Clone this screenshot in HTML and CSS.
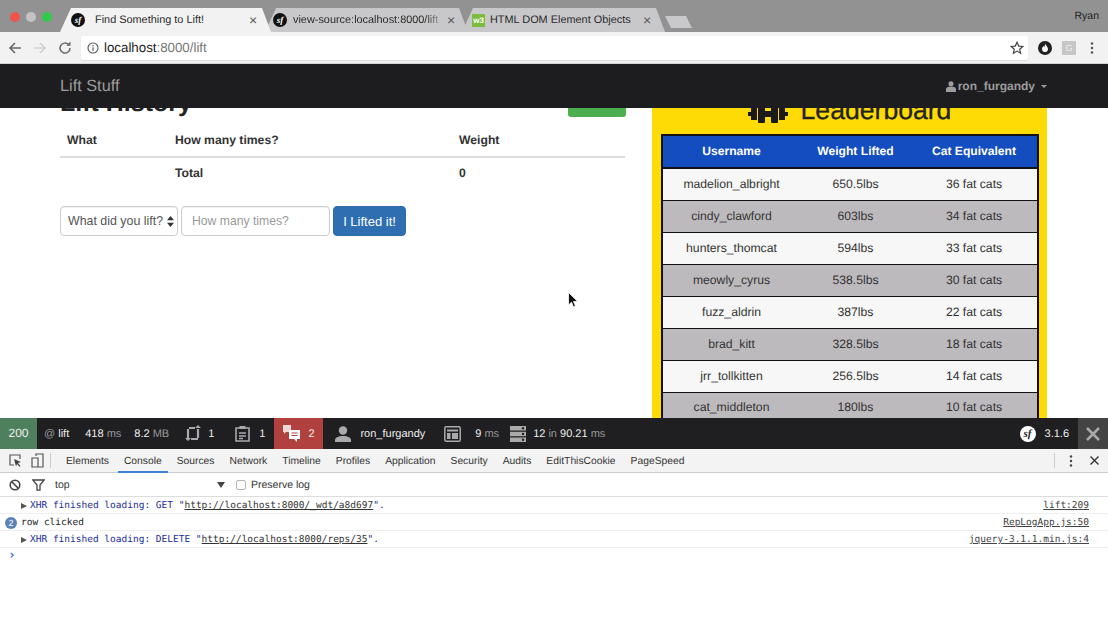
FILE: index.html
```html
<!DOCTYPE html>
<html lang="en">
<head>
<meta charset="utf-8">
<title>Find Something to Lift!</title>
<link rel="stylesheet" href="styles.css">
</head>
<body>
<div class="window">
  <header class="tabstrip">
    <div class="traffic"><i class="dot red"></i><i class="dot grey"></i><i class="dot green"></i></div>
    <div class="tabs">
      <div class="tab tab-active">
        <span class="sf sf-dark">sf</span><span class="tab-title">Find Something to Lift!</span><span class="tab-x">×</span>
      </div>
      <div class="tab tab-second">
        <span class="sf sf-dark">sf</span><span class="tab-title tab-fade">view-source:localhost:8000/lift</span><span class="tab-x">×</span>
      </div>
      <div class="tab tab-third">
        <span class="w3">w3</span><span class="tab-title">HTML DOM Element Objects</span><span class="tab-x">×</span>
      </div>
      <div class="tab-new"></div>
    </div>
    <span class="profile">Ryan</span>
  </header>

  <div class="addressbar">
    <svg class="nav-ico" width="16" height="16" viewBox="0 0 16 16"><path d="M14 8H3M8 3L3 8l5 5" fill="none" stroke="#666" stroke-width="1.5"/></svg>
    <svg class="nav-ico" width="16" height="16" viewBox="0 0 16 16"><path d="M2 8h11M8 3l5 5-5 5" fill="none" stroke="#cfcfcf" stroke-width="1.5"/></svg>
    <svg class="nav-ico" width="16" height="16" viewBox="0 0 16 16"><path d="M13 8a5 5 0 1 1-1.5-3.5" fill="none" stroke="#666" stroke-width="1.5"/><path d="M13.5 1.5v4.2H9.3z" fill="#666"/></svg>
    <div class="omnibox">
      <svg width="12" height="12" viewBox="0 0 12 12"><circle cx="6" cy="6" r="5" fill="none" stroke="#555" stroke-width="1.1"/><path d="M6 5.2v3.6M6 3v1.2" stroke="#555" stroke-width="1.2"/></svg>
      <span class="url"><b>localhost</b>:8000/lift</span>
      <svg class="star" width="14" height="14" viewBox="0 0 14 14"><path d="M7 1.3l1.7 3.8 4.1.4-3.1 2.7.9 4-3.6-2.1-3.6 2.1.9-4-3.1-2.7 4.1-.4z" fill="none" stroke="#444" stroke-width="1.2"/></svg>
    </div>
    <svg class="ext-fire" width="14" height="14" viewBox="0 0 14 14"><circle cx="7" cy="7" r="7" fill="#222"/><path d="M7 2.5c.5 2 3 3 3 5.600A3 3 0 0 1 7 11a3 3 0 0 1-3-2.900c0-1.500 1-2 1.300-3 .5.4.8.8.9 1.300C6.700 5 7 3.800 7 2.500z" fill="#fff"/></svg>
    <span class="ext-g">G</span>
    <svg class="menu-dots" width="4" height="14" viewBox="0 0 4 14"><circle cx="2" cy="2.500" r="1.300" fill="#555"/><circle cx="2" cy="7" r="1.300" fill="#555"/><circle cx="2" cy="11.500" r="1.300" fill="#555"/></svg>
  </div>

  <nav class="navbar">
    <a class="brand">Lift Stuff</a>
    <div class="nav-user">
      <svg width="10" height="11" viewBox="0 0 11 12"><circle cx="5.500" cy="3" r="2.800" fill="#9d9d9d"/><path d="M0 12V9c0-2 2-3 5.500-3S11 7 11 9v3z" fill="#9d9d9d"/></svg>
      <span>ron_furgandy</span><i class="caret"></i>
    </div>
  </nav>

  <main class="page">
    <section class="history">
      <div class="history-head">
        <h2>Lift History</h2>
        <span class="btn-green"></span>
      </div>
      <table class="lifts">
        <thead><tr><th class="c1">What</th><th class="c2">How many times?</th><th>Weight</th></tr></thead>
        <tbody><tr><td></td><th>Total</th><th>0</th></tr></tbody>
      </table>
      <form class="lift-form">
        <div class="select-wrap">
          <select class="field select"><option>What did you lift?</option></select>
          <svg class="select-arrows" width="7" height="11" viewBox="0 0 7 11"><path d="M3.500 0L7 4.300H0zM3.500 11L0 6.700h7z" fill="#333"/></svg>
        </div>
        <input class="field input" placeholder="How many times?">
        <button class="btn-blue" type="button">I Lifted it!</button>
      </form>
    </section>

    <aside class="board">
      <h2 class="board-title">
        <svg width="40" height="18" viewBox="0 0 40 18"><path d="M0 7h3V3h6v12H3v-4H0zM10 1a1 1 0 0 1 1-1h5a1 1 0 0 1 1 1v5h6V1a1 1 0 0 1 1-1h5a1 1 0 0 1 1 1v16a1 1 0 0 1-1 1h-5a1 1 0 0 1-1-1v-5h-6v5a1 1 0 0 1-1 1h-5a1 1 0 0 1-1-1zM31 3h6v4h3v4h-3v4h-6z" fill="#1a1a1a"/></svg>
        <span>Leaderboard</span>
      </h2>
      <table class="leaders">
        <thead><tr><th class="l1">Username</th><th class="l2">Weight Lifted</th><th>Cat Equivalent</th></tr></thead>
        <tbody>
          <tr><td>madelion_albright</td><td>650.5lbs</td><td>36 fat cats</td></tr>
          <tr><td>cindy_clawford</td><td>603lbs</td><td>34 fat cats</td></tr>
          <tr><td>hunters_thomcat</td><td>594lbs</td><td>33 fat cats</td></tr>
          <tr><td>meowly_cyrus</td><td>538.5lbs</td><td>30 fat cats</td></tr>
          <tr><td>fuzz_aldrin</td><td>387lbs</td><td>22 fat cats</td></tr>
          <tr><td>brad_kitt</td><td>328.5lbs</td><td>18 fat cats</td></tr>
          <tr><td>jrr_tollkitten</td><td>256.5lbs</td><td>14 fat cats</td></tr>
          <tr><td>cat_middleton</td><td>180lbs</td><td>10 fat cats</td></tr>
        </tbody>
      </table>
    </aside>

    <svg class="cursor" width="11" height="16" viewBox="0 0 11 16"><path d="M.5.5v12.500l3-2.800 2 4.800 2-.9-2-4.600h4.200z" fill="#111" stroke="#fff" stroke-width=".8"/></svg>
  </main>

  <div class="sfbar">
    <span class="sf-status">200</span>
    <span class="sf-route"><em>@</em> lift</span>
    <span class="sf-time">418 <em>ms</em></span>
    <span class="sf-mem">8.2 <em>MB</em></span>
    <span class="sf-block sf-forms">
      <svg width="16" height="17" viewBox="0 0 16 17"><path d="M3 4v9M13 4v9M4 3h6M6 14h7" fill="none" stroke="#aaa" stroke-width="2.200"/><path d="M10 3l3-3 3 3zM0 13l3 3 3-3z" fill="#aaa"/></svg>
      <b>1</b>
    </span>
    <span class="sf-block sf-logs">
      <svg width="15" height="17" viewBox="0 0 15 17"><path d="M1 3h13v13H1z" fill="none" stroke="#aaa" stroke-width="1.600"/><path d="M4.500 1h6v3h-6z" fill="#aaa"/><path d="M4 8h7M4 11h7M4 13.500h4" stroke="#aaa" stroke-width="1.300"/></svg>
      <b>1</b>
    </span>
    <span class="sf-errors">
      <svg width="19" height="20" viewBox="0 0 19 20"><path d="M1 1h8v7H4L2 10V8H1z" fill="#f0d8d8"/><path d="M7 6h11v9h-3v3l-3-3H7z" fill="#fff"/><path d="M9.500 9h6M9.500 11.500h6" stroke="#b0413e" stroke-width="1.200"/></svg>
      <b>2</b>
    </span>
    <span class="sf-block sf-user">
      <svg width="16" height="16" viewBox="0 0 16 16"><circle cx="8" cy="4.500" r="4.200" fill="#aaa"/><path d="M0 16v-2c0-2 3-4 8-4s8 2 8 4v2z" fill="#aaa"/></svg>
      <b>ron_furgandy</b>
    </span>
    <span class="sf-block sf-tpl">
      <svg width="17" height="16" viewBox="0 0 17 16"><rect x=".8" y=".8" width="15.400" height="14.400" rx="1.500" fill="none" stroke="#aaa" stroke-width="1.500"/><path d="M3 3.500h11v2H3zM3 7h3.500v6H3zM8 7h6v6H8z" fill="#aaa"/></svg>
      <b>9 <em>ms</em></b>
    </span>
    <span class="sf-block sf-db">
      <svg width="16" height="16" viewBox="0 0 16 16"><path d="M0 0h16v4.500H0zM0 5.800h16v4.500H0zM0 11.500h16V16H0z" fill="#aaa"/><circle cx="13" cy="2.200" r="1.200" fill="#222"/><circle cx="13" cy="8" r="1.200" fill="#222"/><circle cx="13" cy="13.700" r="1.200" fill="#222"/></svg>
      <b>12 <em>in</em> 90.21 <em>ms</em></b>
    </span>
    <span class="sf-version"><span class="sf sf-light">sf</span><b>3.1.6</b></span>
    <span class="sf-close"><svg width="14" height="14" viewBox="0 0 14 14"><path d="M1 1l12 12M13 1L1 13" stroke="#aaa" stroke-width="2.500"/></svg></span>
  </div>

  <section class="devtools">
    <div class="dt-tabs">
      <svg class="dt-ico" width="13" height="13" viewBox="0 0 13 13"><path d="M5 11H1V1h10v4" fill="none" stroke="#555" stroke-width="1.200"/><path d="M5 5l7 3-3 1 2.500 3-1 .8L8 10l-1 2.500z" fill="#444"/></svg>
      <svg class="dt-ico2" width="13" height="15" viewBox="0 0 13 15"><path d="M5 3V1h7v13H5M1 5h6v9H1z" fill="none" stroke="#555" stroke-width="1.200"/></svg>
      <i class="dt-sep"></i>
      <span class="dt-tab">Elements</span>
      <span class="dt-tab dt-tab-on">Console</span>
      <span class="dt-tab">Sources</span>
      <span class="dt-tab">Network</span>
      <span class="dt-tab">Timeline</span>
      <span class="dt-tab">Profiles</span>
      <span class="dt-tab">Application</span>
      <span class="dt-tab">Security</span>
      <span class="dt-tab">Audits</span>
      <span class="dt-tab">EditThisCookie</span>
      <span class="dt-tab">PageSpeed</span>
      <i class="dt-sep dt-sep-right"></i>
      <svg class="dt-more" width="4" height="12" viewBox="0 0 4 12"><circle cx="2" cy="1.500" r="1.200" fill="#444"/><circle cx="2" cy="6" r="1.200" fill="#444"/><circle cx="2" cy="10.500" r="1.200" fill="#444"/></svg>
      <svg class="dt-close" width="9" height="9" viewBox="0 0 9 9"><path d="M.5.5l8 8M8.500.5l-8 8" stroke="#333" stroke-width="1.400"/></svg>
    </div>
    <div class="dt-filter">
      <svg width="12" height="12" viewBox="0 0 12 12"><circle cx="6" cy="6" r="4.800" fill="none" stroke="#444" stroke-width="1.600"/><path d="M2.500 2.500l7 7" stroke="#444" stroke-width="1.600"/></svg>
      <svg class="dt-funnel" width="13" height="12" viewBox="0 0 13 12"><path d="M.8 1h11.400L8 6v5.200H5V6z" fill="none" stroke="#444" stroke-width="1.300"/></svg>
      <span class="dt-context">top</span>
      <i class="dt-tri"></i>
      <i class="dt-check"></i>
      <span class="dt-preserve">Preserve log</span>
    </div>
    <div class="log">
      <div class="log-row"><i class="log-arrow"></i><span class="xhr">XHR finished loading: GET "<u>http://localhost:8000/_wdt/a8d697</u>".</span><u class="src">lift:209</u></div>
      <div class="log-row log-row-plain"><span class="badge">2</span><span>row clicked</span><u class="src">RepLogApp.js:50</u></div>
      <div class="log-row"><i class="log-arrow"></i><span class="xhr">XHR finished loading: DELETE "<u>http://localhost:8000/reps/35</u>".</span><u class="src">jquery-3.1.1.min.js:4</u></div>
      <div class="prompt">›</div>
    </div>
  </section>
</div>
</body>
</html>
```
FILE: styles.css
```css
* { box-sizing: border-box; }
html, body { margin: 0; padding: 0; height: 100%; overflow: hidden; }
body { font-family: "Liberation Sans", Arial, sans-serif; background: #fff; color: #333; text-rendering: geometricPrecision; }
.window { width: 1108px; height: 624px; display: flex; flex-direction: column; overflow: hidden; }

/* tab strip */
.tabstrip { height: 32px; flex: none; background: #929292; display: flex; position: relative; }
.traffic { width: 60px; flex: none; display: flex; gap: 6px; padding: 12px 0 0 10px; }
.dot { width: 10px; height: 10px; border-radius: 50%; display: block; }
.red { background: #f0544c; }
.grey { background: #c4c2c6; }
.green { background: #32c84a; }
.tabs { display: flex; flex: 1; padding-top: 8px; height: 32px; }
.tab { height: 24px; display: flex; align-items: center; font-size: 10.900px; color: #2a2a2a; background: #c8c8ca; flex: none;
  clip-path: polygon(0 100%, 11px 0, calc(100% - 9px) 0, 100% 100%); }
.tab-active { width: 211px; background: #f2f2f2; padding: 0 11px; z-index: 2; }
.tab-second { width: 203px; margin-left: -6px; padding: 0 10px 0 8px; z-index: 1; }
.tab-third { width: 203px; margin-left: -6px; padding: 0 11px 0 10px; }
.tab-title { flex: 1; white-space: nowrap; overflow: hidden; margin-left: 10px; }
.tab-second .tab-title { margin-left: 6px; }
.tab-third .tab-title { margin-left: 5px; }
.tab-fade { -webkit-mask-image: linear-gradient(90deg, #000 88%, transparent); mask-image: linear-gradient(90deg, #000 88%, transparent); }
.tab-x { font-size: 14px; color: #555; width: 14px; text-align: center; flex: none; }
.tab-new { width: 27px; height: 12px; margin: 8px 0 0 0; background: #c9c9cb; clip-path: polygon(0 0, 21px 0, 100% 100%, 6px 100%); }
.sf { display: inline-flex; align-items: center; justify-content: center; border-radius: 50%; width: 14px; height: 14px; flex: none;
  font: italic bold 9px "Liberation Serif", serif; }
.sf-dark { background: #111; color: #fff; }
.sf-light { background: #fff; color: #222; width: 16px; height: 16px; font-size: 11px; }
.w3 { width: 13px; height: 13px; flex: none; background: #7dbb3d; color: #fff; font-size: 8px; text-align: center; line-height: 13px; font-weight: bold; }
.profile { position: absolute; right: 9px; top: 10px; font-size: 10.500px; color: #1f1f1f; }

/* address bar */
.addressbar { height: 32px; flex: none; background: #f2f2f2; display: flex; align-items: center; padding: 0 14px 0 7px; border-bottom: 1px solid #d4d4d4; }
.nav-ico { margin-right: 9px; }
.omnibox { width: 947px; height: 24px; background: #fff; margin-left: -1px; border-radius: 2px; box-shadow: 0 1px 1px #dcdcdc; display: flex; align-items: center; padding: 0 4px 0 6px; }
.url { font-size: 13.300px; color: #777; margin-left: 5px; flex: 1; }
.url b { font-weight: normal; color: #222; }
.ext-fire { margin-left: 10px; }
.ext-g { width: 14px; height: 14px; background: #c6c6c6; color: #eee; font-size: 9px; line-height: 14px; text-align: center; margin-left: 10px; }
.menu-dots { margin-left: 14px; }

/* navbar */
.navbar { height: 44px; flex: none; background: #1d1c1f; display: flex; align-items: center; justify-content: space-between; padding: 0 61px 0 60px; z-index: 3; position: relative; }
.brand { font-size: 16.300px; color: #9d9d9d; }
.nav-user { display: flex; align-items: center; color: #9d9d9d; font-size: 12px; font-weight: bold; gap: 2px; }
.caret { width: 0; height: 0; border: 3.500px solid transparent; border-top-color: #9d9d9d; border-bottom: 0; margin-left: 4px; }

/* page */
.page { height: 310px; flex: none; display: flex; padding-left: 60px; overflow: hidden; position: relative; background: #fff; }
.history { width: 566px; flex: none; margin-top: -18px; }
.history-head { height: 34px; display: flex; justify-content: space-between; align-items: flex-start; }
.history-head h2 { margin: 0; font-size: 25px; line-height: 26px; font-weight: bold; color: #222; }
.btn-green { width: 58px; height: 27px; background: #4cae4f; border-radius: 0 0 3px 3px; }
.lifts { width: 565px; border-collapse: collapse; font-size: 12.200px; color: #333; }
.lifts th { text-align: left; font-weight: bold; padding: 0 7px; }
.lifts thead th { height: 33px; border-bottom: 2px solid #ddd; }
.lifts tbody th { height: 31px; }
.lifts td { padding: 0; }
.c1 { width: 108px; }
.c2 { width: 284px; }
.lift-form { display: flex; gap: 3px; margin-top: 18px; }
.field { height: 30px; border: 1px solid #ccc; border-radius: 4px; background: #fff; font-family: inherit; font-size: 12.400px; color: #555; outline: none; box-shadow: inset 0 1px 1px rgba(0,0,0,.06); }
.select-wrap { position: relative; width: 118px; }
.select { width: 118px; -webkit-appearance: none; appearance: none; padding: 0 0 0 7px; }
.select-arrows { position: absolute; right: 4px; top: 10px; }
.input { width: 149px; padding: 0 10px; font-size: 12.200px; }
.input::placeholder { color: #999; opacity: 1; }
.btn-blue { width: 73px; height: 30px; border: 1px solid #2e6da4; border-radius: 4px; background: #2f6fb1; color: #fff; font: 13px "Liberation Sans", Arial, sans-serif; padding: 0; }

/* leaderboard */
.board { width: 395px; flex: none; margin-left: 26px; background: #ffdb05; padding: 0 8px 0 9px; }
.board-title { margin: -13px 0 0; height: 39px; display: flex; align-items: flex-start; justify-content: center; gap: 13px; font-weight: normal; font-size: 26.600px; line-height: 30px; color: #222; padding-right: 1px; -webkit-text-stroke: .3px #222; }
.board-title svg { margin-top: 10px; }
.leaders { width: 378px; border-collapse: collapse; table-layout: fixed; font-size: 12.200px; color: #333; border: 2px solid #111; }
.leaders th { height: 33px; background: #134dbf; color: #fff; font-size: 12.100px; font-weight: bold; border-bottom: 2px solid #111; padding: 0 0 2px; }
.leaders td { height: 32px; text-align: center; border-bottom: 1px solid #111; background: #f7f7f7; padding: 0 0 1px; }
.leaders tr:nth-child(even) td { background: #bdbabe; }
.l1 { width: 138px; }
.l2 { width: 111px; }
.cursor { position: absolute; left: 568px; top: 184px; }

/* symfony toolbar */
.sfbar { height: 31px; flex: none; background: #1f1e21; display: flex; align-items: center; color: #eee; font-size: 11px; position: relative; z-index: 3; }
.sfbar em { font-style: normal; color: #999; }
.sfbar b { font-weight: normal; }
.sf-status { width: 37px; height: 31px; background: #4f805d; line-height: 31px; text-align: center; font-size: 12px; }
.sf-route { margin-left: 7px; }
.sf-time { margin-left: 16px; }
.sf-mem { margin-left: 13px; }
.sf-block { display: flex; align-items: center; }
.sf-forms { margin-left: 16px; gap: 7px; }
.sf-logs { margin-left: 21px; gap: 9px; }
.sf-errors { margin-left: 9px; width: 49px; height: 31px; background: #b0413e; display: flex; align-items: center; gap: 7px; padding-left: 8px; }
.sf-user { margin-left: 12px; gap: 9px; }
.sf-tpl { margin-left: 19px; gap: 14px; }
.sf-db { margin-left: 11px; gap: 7px; }
.sf-version { margin-left: auto; display: flex; align-items: center; gap: 9px; }
.sf-close { width: 30px; height: 31px; margin-left: 9px; background: #444; display: flex; align-items: center; justify-content: center; }

/* devtools */
.devtools { flex: 1; background: #fff; display: flex; flex-direction: column; min-height: 0; }
.dt-tabs { height: 24px; flex: none; background: #f3f3f3; border-bottom: 1px solid #ccc; display: flex; align-items: center; padding-left: 9px; font-size: 10.300px; color: #333; }
.dt-ico2 { margin-left: 9px; }
.dt-sep { width: 1px; height: 15px; background: #ccc; margin: 0 7.500px 0 6px; }
.dt-tab { height: 23px; line-height: 25px; margin: 0 7.500px; white-space: nowrap; }
.dt-tab-on { position: relative; }
.dt-tab-on::after { content: ""; position: absolute; left: -6px; right: -6px; bottom: -1px; height: 2px; background: #3e82d8; }
.dt-sep-right { margin: 0 0 0 auto; }
.dt-more { margin-left: 14px; }
.dt-close { margin: 0 9px 0 17px; }
.dt-filter { height: 24px; flex: none; border-bottom: 1px solid #ddd; display: flex; align-items: center; padding-left: 9px; font-size: 10.500px; color: #333; }
.dt-funnel { margin-left: 11px; }
.dt-context { margin-left: 10px; width: 162px; }
.dt-tri { width: 0; height: 0; border: 4px solid transparent; border-top: 6px solid #444; border-bottom: 0; }
.dt-check { width: 10px; height: 10px; border: 1px solid #b5b5b5; border-radius: 2px; margin-left: 11px; background: #fff; }
.dt-preserve { margin-left: 5px; }
.log { font: 9.500px "DejaVu Sans Mono", monospace; color: #222; }
.log-row { height: 17px; display: flex; align-items: center; padding: 1px 19px 0 21px; border-bottom: 1px solid #efefef; }
.log-row-plain { padding-left: 5px; }
.log-arrow { width: 0; height: 0; border: 3.500px solid transparent; border-left: 6px solid #555; border-right: 0; margin-right: 3px; }
.xhr { color: #1c2e9b; }
.xhr u { color: #333; }
.src { margin-left: auto; color: #444; }
.badge { width: 12px; height: 12px; border-radius: 50%; background: #5a82b5; color: #fff; font: 9px/12px "Liberation Sans", Arial, sans-serif; text-align: center; margin-right: 4px; }
.prompt { font-size: 13px; line-height: 16px; color: #2d6fd0; padding-left: 8px; font-weight: bold; }
```
